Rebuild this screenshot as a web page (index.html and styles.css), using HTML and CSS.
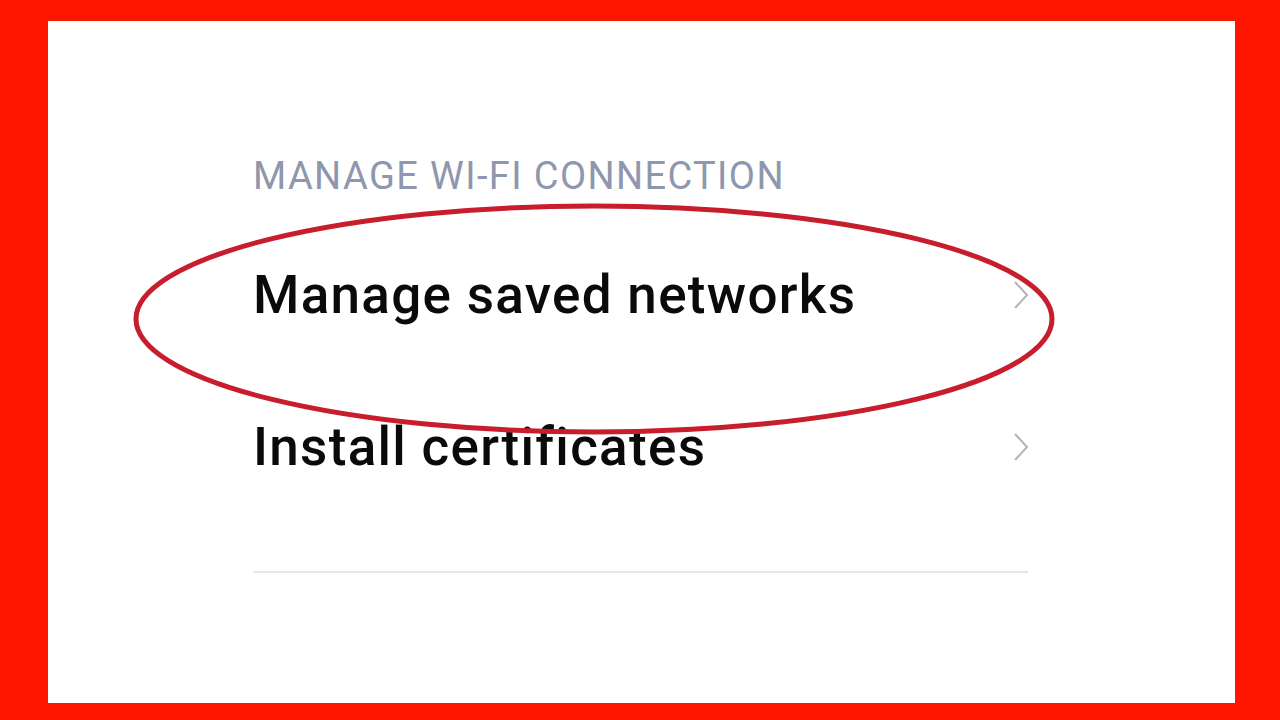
FILE: index.html
```html
<!DOCTYPE html>
<html lang="en">
<head>
<meta charset="UTF-8" />
<meta name="viewport" content="width=device-width, initial-scale=1" />
<title>Manage Wi-Fi connection</title>
<link rel="stylesheet" href="styles.css">
</head>
<body>

<div class="frame">
  <section class="settings" aria-label="Manage Wi-Fi connection">
    <h2 class="group-title">MANAGE WI-FI CONNECTION</h2>

    <div class="row">
      <span class="row-label">Manage saved networks</span>
      <svg class="chevron" width="18" height="30" viewBox="0 0 18 30" aria-hidden="true">
        <path d="M3 2 L15 15 L3 28" fill="none" stroke="#b4b4b4" stroke-width="2" />
      </svg>
    </div>

    <div class="row">
      <span class="row-label">Install certificates</span>
      <svg class="chevron" width="18" height="30" viewBox="0 0 18 30" aria-hidden="true">
        <path d="M3 2 L15 15 L3 28" fill="none" stroke="#b4b4b4" stroke-width="2" />
      </svg>
    </div>

    <hr class="divider" />
  </section>

  <!-- hand-drawn highlight round the first item -->
  <svg class="highlight" width="930" height="240" viewBox="0 0 930 240" aria-hidden="true">
    <ellipse cx="465" cy="120" rx="458" ry="113" fill="none" stroke="#c81d2d" stroke-width="5" />
  </svg>
</div>

</body>
</html>
```

FILE: styles.css
```css
html, body {
  margin: 0;
  height: 100%;
}
body {
  background: #fe1600;
  font-family: Roboto, "Noto Sans", "Liberation Sans", sans-serif;
  padding: 21px 45px 17px 48px;
  box-sizing: border-box;
}

.frame {
  position: relative;
  background: #fff;
  height: 100%;
  overflow: hidden;
}

.settings {
  width: 775px;
  padding: 135px 0 0 205px;
}

.group-title {
  margin: 0 0 23px;
  font-size: 38px;
  line-height: 40px;
  font-weight: 400;
  color: #8e97ad;
  letter-spacing: 1.4px;
  white-space: nowrap;
}

.row {
  display: flex;
  align-items: center;
  justify-content: space-between;
  height: 152px;
}
.row-label {
  font-size: 53px;
  line-height: 152px;
  font-weight: 500;
  color: #0a0a0a;
  letter-spacing: 1.3px;
}
.chevron {
  display: block;
  margin-right: -2px;
}

.divider {
  margin: 48px 0 0;
  border: none;
  height: 2px;
  background: #e6e6e6;
}

/* Red ellipse drawn over the first row */
.highlight {
  position: absolute;
  left: 81px;
  top: 178px;
  pointer-events: none;
}
```
